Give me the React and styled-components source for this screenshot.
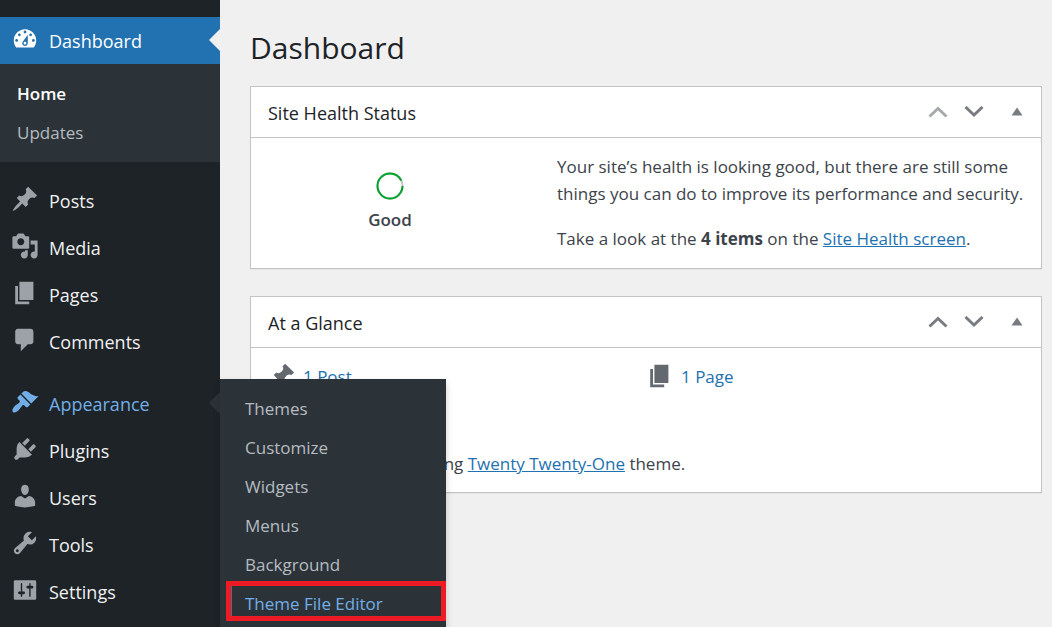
import React from "react"
import styled, { createGlobalStyle, css } from "styled-components"

const colors = {
  page: "#f0f0f1",
  menu: "#1d2327",
  submenu: "#2c3338",
  submenuText: "#b5bbc1",
  icon: "#9ca2a7",
  current: "#2271b1",
  hover: "#72aee6",
  border: "#c3c4c7",
  text: "#3c434a",
  title: "#1d2327",
}

const icons = {
  dashboard:
    "M3.76 16h12.48c1.1-1.37 1.76-3.11 1.76-5 0-4.42-3.58-8-8-8s-8 3.58-8 8c0 1.89.66 3.63 1.76 5zM10 4c.55 0 1 .45 1 1s-.45 1-1 1-1-.45-1-1 .45-1 1-1zM6 6c.55 0 1 .45 1 1s-.45 1-1 1-1-.45-1-1 .45-1 1-1zm8 0c.55 0 1 .45 1 1s-.45 1-1 1-1-.45-1-1 .45-1 1-1zm-5.37 5.55L12 7v6c0 1.1-.9 2-2 2s-2-.9-2-2c0-.57.24-1.08.63-1.45zM4 10c.55 0 1 .45 1 1s-.45 1-1 1-1-.45-1-1 .45-1 1-1zm12 0c.55 0 1 .45 1 1s-.45 1-1 1-1-.45-1-1 .45-1 1-1zm-5 3c0-.55-.45-1-1-1s-1 .45-1 1 .45 1 1 1 1-.45 1-1z",
  post:
    "M10.44 3.02l1.82-1.82 6.36 6.35-1.83 1.82c-1.05-.68-2.48-.57-3.41.36l-.75.75c-.92.93-1.04 2.35-.35 3.41l-1.83 1.82-2.41-2.41-2.8 2.79c-.42.42-3.38 2.71-3.8 2.29s1.86-3.39 2.28-3.81l2.79-2.79L4.1 9.36l1.83-1.82c1.05.69 2.48.57 3.4-.36l.75-.75c.93-.92 1.05-2.35.36-3.41z",
  media:
    "M13 11V4c0-.55-.45-1-1-1h-1.67L9 1H5L3.67 3H2c-.55 0-1 .45-1 1v7c0 .55.45 1 1 1h10c.55 0 1-.45 1-1zM7 4.5c1.38 0 2.5 1.12 2.5 2.5S8.38 9.5 7 9.5 4.5 8.38 4.5 7 5.62 4.5 7 4.5zM14 6h5v10.5c0 1.38-1.12 2.5-2.5 2.5S14 17.88 14 16.5s1.12-2.5 2.5-2.5c.17 0 .34.02.5.05V9h-3V6zm-4 8.05V13h2v3.5c0 1.38-1.12 2.5-2.5 2.5S7 17.88 7 16.5 8.12 14 9.5 14c.17 0 .34.02.5.05z",
  page: "M6 15V2h10v13H6zm-1 1h8v2H3V5h2v11z",
  comments:
    "M5 2h9c1.1 0 2 .9 2 2v7c0 1.1-.9 2-2 2h-2l-5 5v-5H5c-1.1 0-2-.9-2-2V4c0-1.1.9-2 2-2z",
  appearance:
    "M14.48 11.06L7.41 3.99l1.5-1.5c.5-.56 2.3-.47 3.51.32 1.21.8 1.43 1.28 2.91 2.1 1.18.64 2.45 1.26 4.45.85zm-.71.71L6.7 4.7 4.93 6.47c-.39.39-.39 1.02 0 1.41l1.06 1.06c.39.39.39 1.03 0 1.42-.6.6-1.43 1.11-2.21 1.69-.35.26-.7.53-1.01.84C1.43 14.23.4 16.08 1.4 17.07c.99 1 2.84-.03 4.18-1.36.31-.31.58-.66.85-1.02.57-.78 1.08-1.61 1.69-2.21.39-.39 1.02-.39 1.41 0l1.06 1.06c.39.39 1.02.39 1.41 0z",
  plugins:
    "M13.11 4.36L9.87 7.6 8 5.73l3.24-3.24c.35-.34 1.05-.2 1.56.32.52.51.66 1.21.31 1.55zm-8 1.77l.91-1.12 9.01 9.01-1.19.84c-.71.71-2.63 1.16-3.82 1.16H6.14L4.9 17.26c-.59.59-1.54.59-2.12 0-.59-.58-.59-1.53 0-2.12l1.24-1.24v-3.88c0-1.13.4-3.19 1.09-3.89zm7.26 3.97l3.24-3.24c.34-.35 1.04-.21 1.55.31.52.51.66 1.21.31 1.55l-3.24 3.25z",
  users:
    "M10 9.25c-2.27 0-2.73-3.44-2.73-3.44C7 4.02 7.82 2 9.97 2c2.16 0 2.98 2.02 2.71 3.81 0 0-.41 3.44-2.68 3.44zm0 2.57L12.72 10c2.39 0 4.52 2.33 4.52 4.53v2.49s-3.65 1.13-7.24 1.13c-3.65 0-7.24-1.13-7.24-1.13v-2.49c0-2.25 1.94-4.48 4.47-4.48z",
  tools:
    "M16.68 9.77c-1.34 1.34-3.3 1.67-4.95.99l-5.41 6.52c-.99.99-2.59.99-3.58 0s-.99-2.59 0-3.57l6.52-5.42c-.68-1.65-.35-3.61.99-4.95 1.28-1.28 3.12-1.62 4.72-1.06l-2.89 2.89 2.82 2.82 2.86-2.87c.53 1.58.18 3.39-1.08 4.65zM3.81 16.21c.4.39 1.04.39 1.43 0 .4-.4.4-1.04 0-1.43-.39-.4-1.03-.4-1.43 0-.39.39-.39 1.03 0 1.43z",
  settings:
    "M18 16V4c0-.55-.45-1-1-1H3c-.55 0-1 .45-1 1v12c0 .55.45 1 1 1h14c.55 0 1-.45 1-1zM8 11h1c.55 0 1 .45 1 1s-.45 1-1 1H8v1.5c0 .28-.22.5-.5.5s-.5-.22-.5-.5V13H6c-.55 0-1-.45-1-1s.45-1 1-1h1V5.500c0-.28.22-.5.5-.5s.5.22.5.5V11zm5-2h-1c-.55 0-1-.45-1-1s.45-1 1-1h1V5.500c0-.28.22-.5.5-.5s.5.22.5.5V7h1c.55 0 1 .45 1 1s-.45 1-1 1h-1v5.500c0 .28-.22.5-.5.5s-.5-.22-.5-.5V9z",
}

const GlobalStyle = createGlobalStyle`
  * {
    box-sizing: border-box;
  }
  body {
    margin: 0;
    background: ${colors.page};
    color: ${colors.text};
    font-family: "Open Sans", "Noto Sans", sans-serif;
    font-size: 17px;
    line-height: 27px;
  }
`

const Admin = styled.div`
  display: flex;
  height: 100vh;
  overflow: hidden;
`

const Sidebar = styled.nav`
  flex: 0 0 220px;
  padding-top: 17px;
  background: ${colors.menu};
`

const MenuList = styled.ul`
  margin: 0 0 15px;
  padding: 0;
  list-style: none;
`

const MenuItem = styled.li`
  position: relative;
`

const arrow = css`
  &::after {
    content: "";
    position: absolute;
    right: 0;
    top: 12px;
    border: 11px solid transparent;
    border-left-width: 0;
    border-right-color: ${props => (props.$current ? colors.page : colors.submenu)};
  }
`

const MenuLink = styled.a`
  position: relative;
  display: flex;
  gap: 10px;
  height: 47px;
  padding-left: 11px;
  color: ${props => (props.$open ? colors.hover : props.$current ? "#fff" : "#f0f0f1")};
  background: ${props => (props.$current ? colors.current : "transparent")};
  font-size: 18px;
  line-height: 49px;
  text-decoration: none;
  ${props => (props.$current || props.$open) && arrow}
`

const Dashicon = styled.svg`
  flex: none;
  width: 28px;
  height: 28px;
  fill: currentColor;
`

const MenuIcon = styled(Dashicon)`
  margin-top: 8px;
  color: ${props => (props.$current ? "#fff" : props.$open ? colors.hover : colors.icon)};
`

const Submenu = styled.ul`
  margin: 0;
  padding: 10px 0;
  list-style: none;
  background: ${colors.submenu};
`

const Flyout = styled(Submenu)`
  position: absolute;
  z-index: 2;
  left: 100%;
  top: -1px;
  width: 226px;
  padding-left: 8px;
  box-shadow: 0 4px 7px rgba(0, 0, 0, 0.2);
`

const SubmenuItem = styled.li`
  position: relative;
`

const SubmenuLink = styled.a`
  display: block;
  padding: 0 17px;
  color: ${props => (props.$active ? "#fff" : props.$hover ? colors.hover : colors.submenuText)};
  font-weight: ${props => (props.$active ? 600 : 400)};
  line-height: 39px;
  text-decoration: none;
`

const Marker = styled.span`
  position: absolute;
  inset: -3px 0 2px -2px;
  border: 5px solid #ed1c24;
  box-shadow: inset 1px 0 0 #4a6d8f;
  pointer-events: none;
`

const Content = styled.main`
  flex: 1;
  min-width: 0;
  padding: 26px 10px 0 30px;
`

const PageTitle = styled.h1`
  margin: 0 0 16px;
  color: ${colors.title};
  font-size: 30px;
  font-weight: 400;
  line-height: 44px;
`

const Postbox = styled.section`
  margin-bottom: 27px;
  border: 1px solid ${colors.border};
  background: #fff;
  box-shadow: 0 1px 1px rgba(0, 0, 0, 0.04);
`

const PostboxHeader = styled.header`
  display: flex;
  align-items: center;
  height: 51px;
  border-bottom: 1px solid ${colors.border};
`

const PostboxTitle = styled.h2`
  flex: 1;
  margin: 0;
  padding: 2px 0 0 17px;
  color: ${colors.title};
  font-size: 18px;
  font-weight: 400;
`

const HandleButton = styled.button`
  display: flex;
  align-items: center;
  justify-content: center;
  width: ${props => (props.$wide ? 49 : 36)}px;
  height: 50px;
  padding: 0;
  border: 0;
  background: none;
  color: ${props => (props.disabled ? "#a7aaad" : "#787c82")};
`

const HealthBody = styled.div`
  display: grid;
  grid-template-columns: 244px 1fr;
  gap: 45px;
  padding: 15px 17px 16px;
`

const HealthProgress = styled.div`
  display: flex;
  flex-direction: column;
  align-items: center;
  gap: 6px;
  padding-top: 19px;
  font-weight: 600;
`

const Paragraph = styled.p`
  margin: 0 0 18px;

  &:last-child {
    margin-bottom: 0;
  }
`

const TextLink = styled.a`
  color: ${colors.current};
`

const GlanceBody = styled.div`
  padding: 14px 17px 15px;
`

const GlanceList = styled.ul`
  display: grid;
  grid-template-columns: 1fr 1fr;
  margin: 0 0 60px;
  padding: 0;
  list-style: none;

  li {
    display: flex;
  }
`

const GlanceLink = styled.a`
  display: flex;
  gap: 7px;
  height: 28px;
  line-height: 30px;
  color: ${colors.current};
  text-decoration: none;

  ${Dashicon} {
    color: #646970;
  }
`

const menu = [
  [
    { label: "Dashboard", icon: "dashboard", current: true, submenu: ["Home", "Updates"] },
  ],
  [
    { label: "Posts", icon: "post" },
    { label: "Media", icon: "media" },
    { label: "Pages", icon: "page" },
    { label: "Comments", icon: "comments" },
  ],
  [
    {
      label: "Appearance",
      icon: "appearance",
      open: true,
      flyout: ["Themes", "Customize", "Widgets", "Menus", "Background", "Theme File Editor"],
    },
    { label: "Plugins", icon: "plugins" },
    { label: "Users", icon: "users" },
    { label: "Tools", icon: "tools" },
    { label: "Settings", icon: "settings" },
  ],
]

const Icon = ({ name, as: Component = Dashicon, ...rest }) => (
  <Component viewBox="0 0 20 20" aria-hidden="true" {...rest}>
    <path fillRule="evenodd" d={icons[name]} />
  </Component>
)

const Item = ({ item }) => (
  <MenuItem>
    <MenuLink href="#" $current={item.current} $open={item.open}>
      <Icon as={MenuIcon} name={item.icon} $current={item.current} $open={item.open} />
      {item.label}
    </MenuLink>
    {item.submenu && (
      <Submenu>
        {item.submenu.map((label, i) => (
          <SubmenuItem key={label}>
            <SubmenuLink href="#" $active={i === 0}>{label}</SubmenuLink>
          </SubmenuItem>
        ))}
      </Submenu>
    )}
    {item.flyout && (
      <Flyout>
        {item.flyout.map(label => {
          const marked = label === "Theme File Editor"
          return (
            <SubmenuItem key={label}>
              <SubmenuLink href="#" $hover={marked}>{label}</SubmenuLink>
              {marked && <Marker />}
            </SubmenuItem>
          )
        })}
      </Flyout>
    )}
  </MenuItem>
)

const Widget = ({ title, first, children }) => (
  <Postbox>
    <PostboxHeader>
      <PostboxTitle>{title}</PostboxTitle>
      <HandleButton type="button" aria-label="Move up" disabled={first}>
        <svg width="20" height="12" viewBox="0 0 20 12" fill="none" stroke="currentColor" strokeWidth="3">
          <path d="M1.5 10.5L10 2.5l8.5 8" />
        </svg>
      </HandleButton>
      <HandleButton type="button" aria-label="Move down">
        <svg width="20" height="12" viewBox="0 0 20 12" fill="none" stroke="currentColor" strokeWidth="3">
          <path d="M1.5 1L10 9l8.5-8" />
        </svg>
      </HandleButton>
      <HandleButton type="button" aria-label="Toggle panel" $wide>
        <svg width="12" height="10" viewBox="0 0 12 10" fill="currentColor">
          <path d="M.5 8.5L6 .5l5.500 8z" />
        </svg>
      </HandleButton>
    </PostboxHeader>
    {children}
  </Postbox>
)

const App = () => (
  <Admin>
    <GlobalStyle />
    <Sidebar>
      {menu.map((group, i) => (
        <MenuList key={i}>
          {group.map(item => <Item key={item.label} item={item} />)}
        </MenuList>
      ))}
    </Sidebar>
    <Content>
      <PageTitle>Dashboard</PageTitle>
      <Widget title="Site Health Status" first>
        <HealthBody>
          <HealthProgress>
            <svg width="28" height="28" viewBox="0 0 28 28" fill="none" strokeWidth="2">
              <circle cx="14" cy="14" r="12.500" stroke="#c3c4c7" />
              <circle cx="14" cy="14" r="12.500" stroke="#00a32a" pathLength="100" strokeDasharray="93 7" />
            </svg>
            Good
          </HealthProgress>
          <div>
            <Paragraph>
              Your site’s health is looking good, but there are still some things you can do to
              improve its performance and security.
            </Paragraph>
            <Paragraph>
              Take a look at the <strong>4 items</strong> on the{" "}
              <TextLink href="#">Site Health screen</TextLink>.
            </Paragraph>
          </div>
        </HealthBody>
      </Widget>
      <Widget title="At a Glance">
        <GlanceBody>
          <GlanceList>
            <li><GlanceLink href="#"><Icon name="post" />1 Post</GlanceLink></li>
            <li><GlanceLink href="#"><Icon name="page" />1 Page</GlanceLink></li>
          </GlanceList>
          <Paragraph>
            WordPress 5.9.1 running <TextLink href="#">Twenty Twenty-One</TextLink> theme.
          </Paragraph>
        </GlanceBody>
      </Widget>
    </Content>
  </Admin>
)

export default App
